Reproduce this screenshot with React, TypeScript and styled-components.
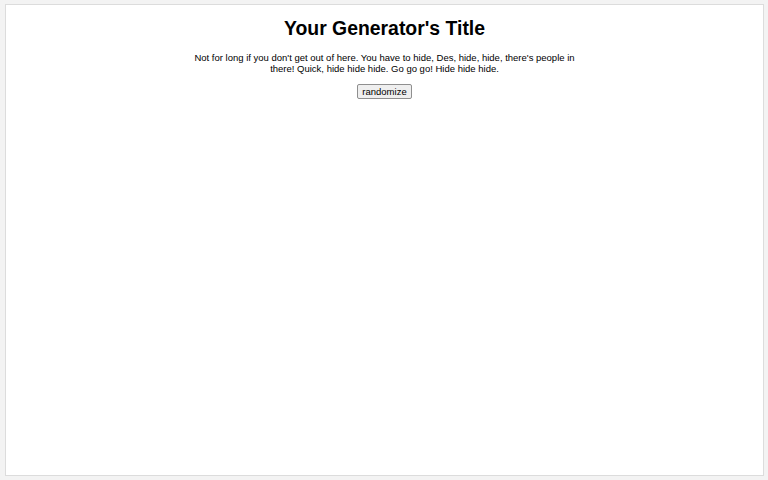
import React from "react";
import styled, { createGlobalStyle } from "styled-components";

const GlobalStyle = createGlobalStyle`
  html, body {
    margin: 0;
    padding: 0;
    background: #f3f3f3;
  }

  body {
    padding: 4px 4px 4px 5px;
    font-family: "Liberation Sans", Arial, sans-serif;
    color: #000;
  }
`;

const Card = styled.main`
  box-sizing: border-box;
  height: 472px;
  background: #ffffff;
  border: 1px solid #dcdcdc;
  display: flex;
  flex-direction: column;
  align-items: center;
  padding-top: 12px;
`;

const Title = styled.h1`
  margin: 0;
  font-size: 19.4px;
  font-weight: bold;
  line-height: 23px;
`;

const Blurb = styled.p`
  margin: 12px 0 0;
  max-width: 386px;
  font-size: 9.5px;
  line-height: 11px;
  text-align: center;
`;

const RandomButton = styled.button`
  margin-top: 10px;
  font-family: "Liberation Sans", Arial, sans-serif;
  font-size: 9.5px;
  line-height: 11px;
  padding: 1px 4px;
  background: #efefef;
  border: 1px solid #8f8f8f;
  border-radius: 2px;
  color: #000;
  cursor: pointer;
`;

const App: React.FC = () => {
  return (
    <>
      <GlobalStyle />
      <Card>
        <Title>Your Generator's Title</Title>
        <Blurb>
          Not for long if you don't get out of here. You have to hide, Des,
          hide, hide, there's people in there! Quick, hide hide hide. Go go
          go! Hide hide hide.
        </Blurb>
        <RandomButton>randomize</RandomButton>
      </Card>
    </>
  );
};

export default App;
